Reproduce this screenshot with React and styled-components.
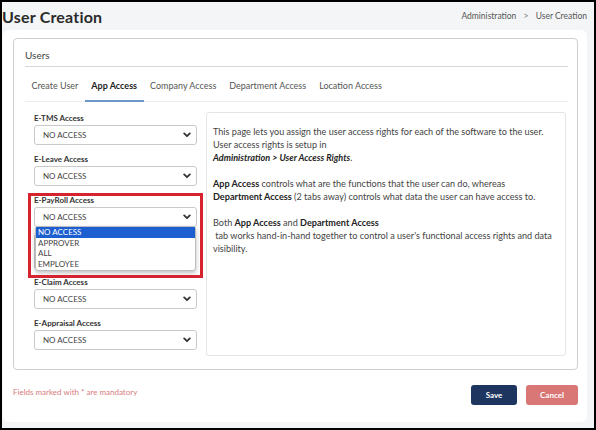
import styled, { createGlobalStyle } from "styled-components";

const GlobalStyle = createGlobalStyle`
  * { box-sizing: border-box; }
  body {
    margin: 0;
    font-family: "Lato", "Noto Sans", sans-serif;
    color: #333;
  }
`;

const options = ["NO ACCESS", "APPROVER", "ALL", "EMPLOYEE"];

const tabs = [
  "Create User",
  "App Access",
  "Company Access",
  "Department Access",
  "Location Access",
];

function Chevron() {
  return (
    <svg width="8" height="6" viewBox="0 0 8 6">
      <path
        d="M1.2 1.4L4 4.2L6.8 1.4"
        fill="none"
        stroke="#333"
        strokeWidth="1.8"
        strokeLinecap="round"
        strokeLinejoin="round"
      />
    </svg>
  );
}

function AccessField({ label, open }) {
  return (
    <Field>
      <FieldLabel>{label}</FieldLabel>
      <SelectBox>
        <span>NO ACCESS</span>
        <Chevron />
      </SelectBox>
      {open && (
        <OptionList>
          {options.map((o, i) => (
            <OptionItem key={o} active={i === 0}>
              {o}
            </OptionItem>
          ))}
        </OptionList>
      )}
    </Field>
  );
}

export default function App() {
  return (
    <>
      <GlobalStyle />
      <Screen>
        <Header>
          <Title>User Creation</Title>
          <Breadcrumb>
            Administration <Sep>&gt;</Sep> User Creation
          </Breadcrumb>
        </Header>
        <Card>
          <Panel>
            <PanelTitle>Users</PanelTitle>
            <TabBar>
              {tabs.map((t) => (
                <Tab key={t} active={t === "App Access"}>
                  {t}
                </Tab>
              ))}
            </TabBar>
            <Body>
              <FieldColumn>
                <AccessField label="E-TMS Access" />
                <AccessField label="E-Leave Access" />
                <Highlight>
                  <AccessField label="E-PayRoll Access" open />
                  {/* field hidden behind the open list */}
                  <CoveredField />
                </Highlight>
                <AccessField label="E-Claim Access" />
                <AccessField label="E-Appraisal Access" />
              </FieldColumn>
              <InfoBox>
                <p>
                  This page lets you assign the user access rights for each of
                  the software to the user.
                  <br />
                  User access rights is setup in
                  <br />
                  <b>
                    <i>Administration &gt; User Access Rights</i>
                  </b>
                  .
                </p>
                <p>
                  <b>App Access</b> controls what are the functions that the
                  user can do, whereas
                  <br />
                  <b>Department Access</b> (2 tabs away) controls what data the
                  user can have access to.
                </p>
                <p>
                  Both <b>App Access</b> and <b>Department Access</b>
                  <br />
                  &nbsp;tab works hand-in-hand together to control a user's
                  functional access rights and data visibility.
                </p>
              </InfoBox>
            </Body>
          </Panel>
          <Footer>
            <Mandatory>Fields marked with * are mandatory</Mandatory>
            <Actions>
              <Button kind="save">Save</Button>
              <Button kind="cancel">Cancel</Button>
            </Actions>
          </Footer>
        </Card>
      </Screen>
    </>
  );
}

const Screen = styled.div`
  width: 596px;
  height: 430px;
  border: 2px solid #000;
  background: #f4f5f7;
  display: flex;
  flex-direction: column;
  overflow: hidden;
`;

const Header = styled.div`
  height: 28px;
  display: flex;
  align-items: center;
  justify-content: space-between;
  padding: 0 7px 0 0;
`;

const Title = styled.h1`
  margin: 0;
  font-size: 16px;
  font-weight: 700;
  color: #2b2b2b;
  letter-spacing: 0.2px;
`;

const Breadcrumb = styled.div`
  font-size: 8.5px;
  color: #555;
`;

const Sep = styled.span`
  margin: 0 5px;
  color: #777;
`;

const Card = styled.div`
  flex: none;
  height: 392px;
  margin: 0 7px 0 1px;
  background: #fff;
  border-radius: 6px;
  padding: 8px 9px 0 10px;
  display: flex;
  flex-direction: column;
`;

const Panel = styled.div`
  height: 332px;
  border: 1px solid #cfcfcf;
  border-radius: 4px;
  padding: 0 9px 0 11px;
  display: flex;
  flex-direction: column;
`;

const PanelTitle = styled.div`
  height: 28px;
  padding-top: 4px;
  display: flex;
  align-items: center;
  font-size: 10px;
  color: #444;
  border-bottom: 1px solid #d6d6d6;
`;

const TabBar = styled.div`
  display: flex;
  height: 35px;
  border-bottom: 1px solid #ececec;
`;

const Tab = styled.div`
  display: flex;
  align-items: center;
  padding: 4px 6.5px 0;
  font-size: 9px;
  color: ${(p) => (p.active ? "#222" : "#555")};
  font-weight: ${(p) => (p.active ? 700 : 400)};
  border-bottom: 2px solid ${(p) => (p.active ? "#6b97c9" : "transparent")};
  margin-bottom: -1px;
`;

const Body = styled.div`
  display: flex;
  gap: 9px;
  padding: 10px 2px 0 9px;
`;

const FieldColumn = styled.div`
  width: 163px;
  display: flex;
  flex-direction: column;
`;

const Field = styled.div`
  position: relative;
  margin-bottom: 8px;
`;

const CoveredField = styled.div`
  height: 33px;
  margin-bottom: 8px;
  border-left: 1px solid #c9c9c9;
`;

const FieldLabel = styled.div`
  height: 12px;
  line-height: 12px;
  margin-bottom: 1px;
  font-size: 8px;
  font-weight: 700;
  color: #333;
`;

const SelectBox = styled.div`
  height: 20px;
  border: 1px solid #c9c9c9;
  border-radius: 3px;
  display: flex;
  align-items: center;
  justify-content: space-between;
  padding: 0 5px 0 8px;
  font-size: 8px;
  color: #444;
  background: #fff;
`;

const OptionList = styled.div`
  position: absolute;
  top: 32px;
  left: 1px;
  right: 1px;
  height: 45px;
  background: #fff;
  border: 1px solid #bdbdbd;
  border-radius: 3px;
  box-shadow: 0 2px 4px rgba(0, 0, 0, 0.25);
  z-index: 2;
`;

const OptionItem = styled.div`
  height: 10.5px;
  line-height: 10.5px;
  padding-left: 2px;
  font-size: 8px;
  color: ${(p) => (p.active ? "#fff" : "#444")};
  background: ${(p) => (p.active ? "#1d5fd1" : "transparent")};
`;

const Highlight = styled.div`
  position: relative;
  &::after {
    content: "";
    position: absolute;
    top: -1px;
    left: -6px;
    right: -6px;
    bottom: -2px;
    border: 3px solid #d5232f;
    pointer-events: none;
    z-index: 3;
  }
`;

const InfoBox = styled.div`
  flex: 1;
  height: 244px;
  border: 1px solid #e4e4e4;
  border-radius: 3px;
  padding: 12px 6px;
  font-size: 9.1px;
  line-height: 13px;
  color: #444;
  p {
    margin: 0 0 13px;
  }
  b {
    color: #222;
  }
`;

const Footer = styled.div`
  display: flex;
  justify-content: space-between;
  align-items: flex-start;
  padding-top: 15px;
`;

const Mandatory = styled.div`
  font-size: 8px;
  color: #d97b7e;
  padding-top: 2px;
`;

const Actions = styled.div`
  display: flex;
  gap: 9px;
`;

const Button = styled.button`
  height: 20px;
  width: ${(p) => (p.kind === "save" ? "46px" : "52px")};
  border: none;
  border-radius: 3px;
  font-family: inherit;
  font-size: 8px;
  font-weight: 700;
  color: #fff;
  background: ${(p) => (p.kind === "save" ? "#1d355f" : "#d87776")};
`;
